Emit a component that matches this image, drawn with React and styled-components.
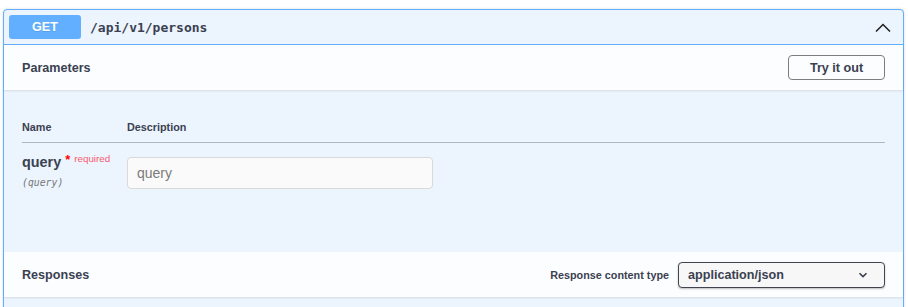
import React from "react";
import styled, { createGlobalStyle } from "styled-components";

const GlobalStyle = createGlobalStyle`
	html, body {
		margin: 0;
		padding: 0;
		background: #ffffff;
	}
	body {
		font-family: "Liberation Sans", Arial, sans-serif;
		color: #3b4151;
	}
`;

export default function App() {
	return (
		<Page>
			<GlobalStyle />
			<TagDivider />
			<OpBlock>
				<Summary>
					<Method>GET</Method>
					<Path>/api/v1/persons</Path>
					<Chevron viewBox="0 0 16 9" aria-hidden="true">
						<path d="M1 8.5 L8 1.5 L15 8.5" />
					</Chevron>
				</Summary>

				<SectionHeader>
					<SectionTitle>Parameters</SectionTitle>
					<TryButton>Try it out</TryButton>
				</SectionHeader>

				<ParamsBody>
					<ParamTable>
						<HeadRow>
							<NameCol>Name</NameCol>
							<HeadCell>Description</HeadCell>
						</HeadRow>
						<ParamRow>
							<NameCol>
								<ParamName>
									query<Star>*</Star>
									<Required>required</Required>
								</ParamName>
								<ParamIn>(query)</ParamIn>
							</NameCol>
							<DescCell>
								<TextInput placeholder="query" />
							</DescCell>
						</ParamRow>
					</ParamTable>
				</ParamsBody>

				<SectionHeader>
					<SectionTitle>Responses</SectionTitle>
					<ContentType>
						<ContentLabel>Response content type</ContentLabel>
						<Select>
							<span>application/json</span>
							<SelectArrow viewBox="0 0 10 6" aria-hidden="true">
								<path d="M1.5 1.2 L5 4.6 L8.5 1.2" />
							</SelectArrow>
						</Select>
					</ContentType>
				</SectionHeader>
				<Rest />
			</OpBlock>
		</Page>
	);
}

const Page = styled.div`
	display: flex;
	flex-direction: column;
	padding-top: 5px;
	height: 307px;
	overflow: hidden;
`;

const TagDivider = styled.div`
	height: 1px;
	background: #cfd1d5;
	margin-bottom: 4px;
`;

const OpBlock = styled.div`
	margin: 0 4px 0 3px;
	border: 1px solid #61affe;
	border-radius: 4px;
	background: #ecf4fd;
	box-shadow: 0 0 3px rgba(0, 0, 0, 0.15);
	display: flex;
	flex-direction: column;
`;

const Summary = styled.div`
	display: flex;
	align-items: center;
	padding: 5px 5px;
	border-bottom: 1px solid #61affe;
`;

const Method = styled.div`
	width: 72px;
	height: 24px;
	line-height: 24px;
	border-radius: 3px;
	background: #61affe;
	color: #ffffff;
	font-size: 12.6px;
	font-weight: 700;
	text-align: center;
	text-shadow: 0 1px 0 rgba(0, 0, 0, 0.1);
`;

const Path = styled.span`
	flex: 1;
	padding: 0 9px;
	font-family: "DejaVu Sans Mono", "Liberation Mono", monospace;
	font-size: 13px;
	font-weight: 600;
	color: #3b4151;
`;

const Chevron = styled.svg`
	width: 16px;
	height: 9px;
	margin-right: 7px;
	fill: none;
	stroke: #1f1f1f;
	stroke-width: 1.5;
`;

const SectionHeader = styled.div`
	display: flex;
	align-items: center;
	justify-content: space-between;
	height: 45px;
	padding: 0 18px 0 18px;
	background: rgba(255, 255, 255, 0.8);
	box-shadow: 0 1px 2px rgba(0, 0, 0, 0.1);
`;

const SectionTitle = styled.h4`
	margin: 0;
	font-size: 12.6px;
	font-weight: 700;
	color: #3b4151;
`;

const TryButton = styled.button`
	width: 97px;
	height: 25px;
	border: 1.5px solid #7d7d7d;
	border-radius: 4px;
	background: transparent;
	font-family: "Liberation Sans", Arial, sans-serif;
	font-size: 12.6px;
	font-weight: 700;
	color: #3b4151;
	padding: 0;
`;

const ParamsBody = styled.div`
	height: 162px;
	padding: 24px 18px 0 18px;
	box-sizing: border-box;
`;

const ParamTable = styled.div`
	display: flex;
	flex-direction: column;
`;

const HeadRow = styled.div`
	display: flex;
	align-items: center;
	height: 25px;
	border-bottom: 1px solid rgba(59, 65, 81, 0.35);
	font-size: 10.8px;
	font-weight: 700;
	color: #3b4151;
	padding-bottom: 3px;
`;

const NameCol = styled.div`
	width: 105px;
	display: flex;
	flex-direction: column;
`;

const HeadCell = styled.div`
	flex: 1;
`;

const ParamRow = styled.div`
	display: flex;
	align-items: flex-start;
	padding-top: 10px;
`;

const ParamName = styled.div`
	font-size: 14.4px;
	font-weight: 700;
	color: #3b4151;
	line-height: 18px;
	white-space: nowrap;
`;

const Star = styled.span`
	color: #ff0000;
	font-size: 13px;
	margin-left: 4px;
	position: relative;
	top: -3px;
`;

const Required = styled.span`
	color: #fb5a70;
	font-size: 9.8px;
	font-weight: 400;
	margin-left: 4px;
	position: relative;
	top: -5px;
`;

const ParamIn = styled.div`
	margin-top: 4px;
	font-family: "DejaVu Sans Mono", monospace;
	font-size: 9.8px;
	font-style: italic;
	font-weight: 400;
	color: #777777;
`;

const DescCell = styled.div`
	flex: 1;
	padding-top: 4px;
`;

const TextInput = styled.input`
	box-sizing: border-box;
	width: 306px;
	height: 32px;
	padding: 0 9px;
	border: 1px solid #d9d9d9;
	border-radius: 4px;
	background: #fafafa;
	font-family: "Liberation Sans", Arial, sans-serif;
	font-size: 14px;
	outline: none;

	&::placeholder {
		color: #7a7a7a;
	}
`;

const ContentType = styled.div`
	display: flex;
	align-items: center;
	gap: 9px;
`;

const ContentLabel = styled.span`
	font-size: 10.8px;
	font-weight: 700;
	color: #3b4151;
`;

const Select = styled.div`
	box-sizing: border-box;
	width: 207px;
	height: 26px;
	display: flex;
	align-items: center;
	justify-content: space-between;
	padding: 0 16px 0 9px;
	border: 1.5px solid #41444e;
	border-radius: 4px;
	background: #f7f7f7;
	box-shadow: 0 1px 2px rgba(0, 0, 0, 0.25);
	font-size: 12.6px;
	font-weight: 700;
	color: #3b4151;
`;

const SelectArrow = styled.svg`
	width: 10px;
	height: 6px;
	fill: none;
	stroke: #3b4151;
	stroke-width: 1.6;
`;

const Rest = styled.div`
	height: 20px;
`;
